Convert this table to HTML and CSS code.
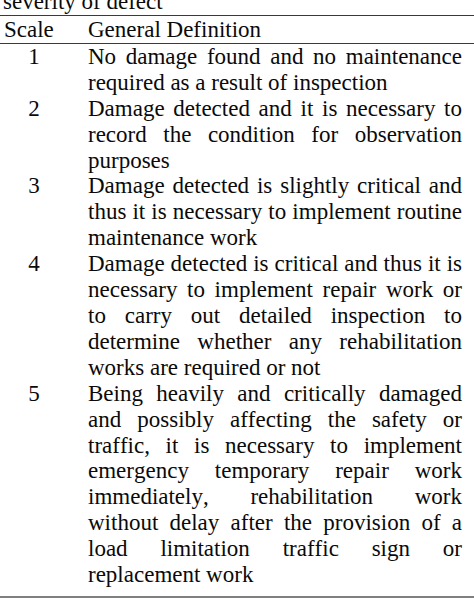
FILE: index.html
```html
<!DOCTYPE html>
<html>
<head>
<meta charset="utf-8">
<link rel="stylesheet" href="styles.css">
</head>
<body>
<div class="page">
  <div class="caption">severity of defect</div>
  <div class="row head">
    <div class="num-h">Scale</div>
    <div class="def">General Definition</div>
  </div>
  <div class="body">
    <div class="row">
      <div class="num">1</div>
      <div class="def">No damage found and no maintenance required as a result of inspection</div>
    </div>
    <div class="row">
      <div class="num">2</div>
      <div class="def">Damage detected and it is necessary to record the condition for observation purposes</div>
    </div>
    <div class="row">
      <div class="num">3</div>
      <div class="def">Damage detected is slightly critical and thus it is necessary to implement routine maintenance work</div>
    </div>
    <div class="row">
      <div class="num">4</div>
      <div class="def">Damage detected is critical and thus it is necessary to implement repair work or to carry out detailed inspection to determine whether any rehabilitation works are required or not</div>
    </div>
    <div class="row">
      <div class="num">5</div>
      <div class="def">Being heavily and critically damaged and possibly affecting the safety or traffic, it is necessary to implement emergency temporary repair work immediately, rehabilitation work without delay after the provision of a load limitation traffic sign or replacement work</div>
    </div>
  </div>
</div>
</body>
</html>
```

FILE: styles.css
```css
html, body {
  margin: 0;
  padding: 0;
  background: #ffffff;
}

body {
  width: 474px;
  height: 598px;
  overflow: hidden;
  font-family: "Liberation Serif", "Times New Roman", serif;
  font-size: 23px;
  line-height: 25.9px;
  color: #0a0a0a;
}

.page {
  margin-top: -10.7px;
  font-kerning: none;
  font-variant-ligatures: none;
}

.caption {
  padding-left: 3px;
  border-bottom: 1px solid #3a3a3a;
}

.row {
  display: grid;
  grid-template-columns: 88px 374px;
}

.head {
  padding-top: 0.8px;
  border-bottom: 1px solid #3a3a3a;
}

.num-h {
  padding-left: 4px;
}

.num {
  text-align: center;
  padding-right: 20px;
}

.def {
  text-align: justify;
}

.body {
  padding-bottom: 8.2px;
  border-bottom: 2px solid #808080;
}
```
